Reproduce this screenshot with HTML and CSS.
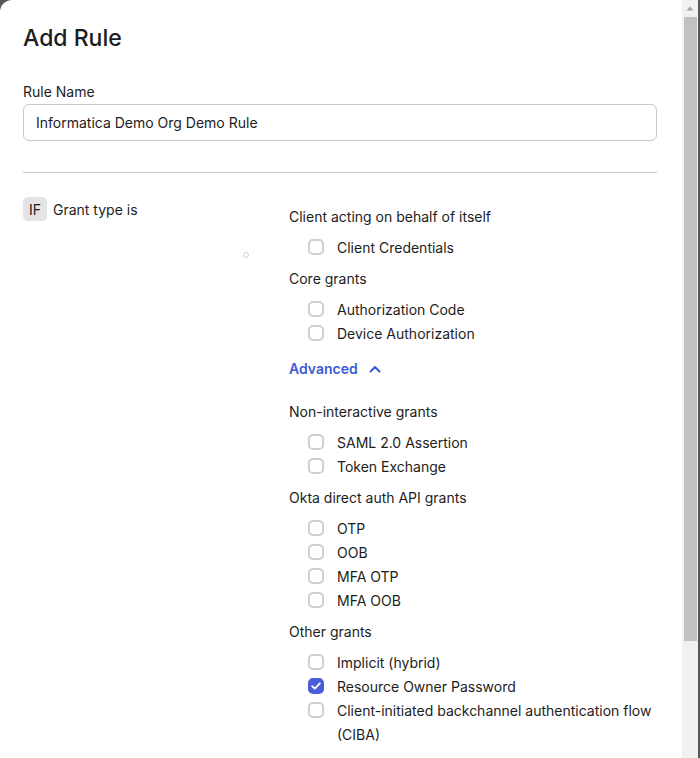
FILE: index.html
```html
<!DOCTYPE HTML>
<html>

<head>
    <title>Add Rule</title>
    <meta name="viewport" content="width=device-width, initial-scale=1">
    <link rel="stylesheet" href="styles.css">
</head>

<body>
    <div class="window">
        <div class="modal">
            <h1>Add Rule</h1>

            <label class="field-label" for="rule-name">Rule Name</label>
            <input id="rule-name" class="text-input" type="text" value="Informatica Demo Org Demo Rule">

            <hr class="divider">

            <!-- Condition row -->
            <div class="rule-row">
                <div class="rule-left">
                    <div class="condition">
                        <span class="badge">IF</span>
                        <span>Grant type is</span>
                    </div>
                    <span class="spinner-dot"></span>
                </div>

                <div class="rule-right">
                    <div class="group-title">Client acting on behalf of itself</div>
                    <div class="group">
                        <label class="check"><span class="box"></span>Client Credentials</label>
                    </div>

                    <div class="group-title">Core grants</div>
                    <div class="group">
                        <label class="check"><span class="box"></span>Authorization Code</label>
                        <label class="check"><span class="box"></span>Device Authorization</label>
                    </div>

                    <button class="advanced" type="button">Advanced
                        <svg width="12" height="8" viewBox="0 0 12 8">
                            <path d="M1.5 6.5 L6 2 L10.5 6.5" fill="none" stroke="currentColor" stroke-width="2" stroke-linecap="round" stroke-linejoin="round" />
                        </svg>
                    </button>

                    <div class="group-title">Non-interactive grants</div>
                    <div class="group">
                        <label class="check"><span class="box"></span>SAML 2.0 Assertion</label>
                        <label class="check"><span class="box"></span>Token Exchange</label>
                    </div>

                    <div class="group-title">Okta direct auth API grants</div>
                    <div class="group">
                        <label class="check"><span class="box"></span>OTP</label>
                        <label class="check"><span class="box"></span>OOB</label>
                        <label class="check"><span class="box"></span>MFA OTP</label>
                        <label class="check"><span class="box"></span>MFA OOB</label>
                    </div>

                    <div class="group-title">Other grants</div>
                    <div class="group">
                        <label class="check"><span class="box"></span>Implicit (hybrid)</label>
                        <label class="check"><span class="box checked">
                            <svg width="10" height="8" viewBox="0 0 10 8">
                                <path d="M1.2 4.2 L3.8 6.6 L8.8 1.4" fill="none" stroke="#fff" stroke-width="1.8" stroke-linecap="round" stroke-linejoin="round" />
                            </svg>
                        </span>Resource Owner Password</label>
                        <label class="check"><span class="box"></span>Client-initiated backchannel authentication flow (CIBA)</label>
                    </div>
                </div>
            </div>
        </div>

        <!-- Scrollbar -->
        <div class="scrollbar">
            <div class="scroll-up">
                <svg width="16" height="17" viewBox="0 0 16 17">
                    <path d="M4.5 10.5 L11.5 10.5 L8 6.5 Z" fill="#a3a3a3" />
                </svg>
            </div>
            <div class="scroll-thumb"></div>
        </div>
    </div>
</body>

</html>
```

FILE: styles.css
```css
html {
    font-family: Inter, "Noto Sans", sans-serif;
    color: #1d1d21;
}

body {
    margin: 0;
    background-color: #575757;
}

.window {
    display: flex;
    width: 698px;
    height: 758px;
    overflow: hidden;
    background-color: #fff;
    border-top-left-radius: 12px;
}

.modal {
    flex: 1;
    min-width: 0;
    overflow: hidden;
    padding: 24px 25px 0 23px;
}

.scrollbar {
    flex: none;
    width: 16px;
    display: flex;
    flex-direction: column;
    background-color: #f1f1f1;
}

.scroll-up {
    height: 17px;
}

.scroll-up svg {
    display: block;
}

.scroll-thumb {
    height: 624px;
    margin: 0 1px 0 2px;
    background-color: #c1c1c1;
}

h1 {
    margin: 0;
    font-size: 23px;
    line-height: 28px;
    font-weight: 500;
}

.field-label {
    display: block;
    margin-top: 30px;
    font-size: 14px;
    line-height: 20px;
}

.text-input {
    display: block;
    width: 100%;
    height: 37px;
    box-sizing: border-box;
    margin-top: 2px;
    padding: 0 12px;
    border: 1px solid #c9c9ce;
    border-radius: 6px;
    font-family: inherit;
    font-size: 14px;
    color: #1d1d21;
    outline: none;
}

.divider {
    margin: 31px 0 0;
    border: none;
    border-top: 1px solid #c9c9ce;
}

.rule-row {
    display: grid;
    grid-template-columns: 266px 1fr;
    margin-top: 24px;
}

.rule-left {
    position: relative;
}

.condition {
    display: flex;
    align-items: center;
    gap: 6px;
    font-size: 14px;
}

.badge {
    width: 24px;
    height: 24px;
    display: flex;
    align-items: center;
    justify-content: center;
    background-color: #e4e4e6;
    border-radius: 5px;
    font-size: 14px;
}

.spinner-dot {
    position: absolute;
    left: 220px;
    top: 55px;
    width: 4px;
    height: 4px;
    border: 1px solid #d2d2d6;
    border-radius: 50%;
}

.rule-right {
    padding-top: 8px;
    font-size: 14px;
    line-height: 24px;
}

.group-title {
    line-height: 24px;
}

.group {
    display: flex;
    flex-direction: column;
    padding: 7px 0 7px 19px;
}

.check {
    display: flex;
    align-items: flex-start;
    gap: 13px;
    line-height: 24px;
}

.box {
    flex: none;
    width: 16px;
    height: 16px;
    box-sizing: border-box;
    margin-top: 3px;
    border: 2px solid #cfcfd3;
    border-radius: 5px;
    display: flex;
    align-items: center;
    justify-content: center;
}

.box.checked {
    background-color: #4a5dd8;
    border-color: #4a5dd8;
}

.advanced {
    display: flex;
    align-items: center;
    gap: 11px;
    margin: 4px 0 19px;
    padding: 0;
    border: none;
    background: none;
    font-family: inherit;
    font-size: 14px;
    line-height: 24px;
    font-weight: 600;
    color: #3d5ad6;
    cursor: pointer;
}
```
